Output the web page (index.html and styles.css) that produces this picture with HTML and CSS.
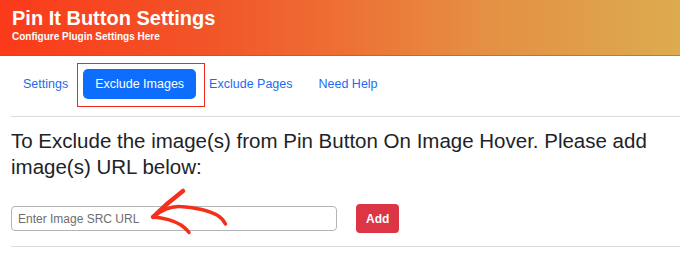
FILE: index.html
```html
<!DOCTYPE html>
<html lang="en">
<head>
<meta charset="utf-8">
<title>Pin It Button Settings</title>
<link rel="stylesheet" href="styles.css">
</head>
<body>
<header class="hero">
  <h1 class="hero-title">Pin It Button Settings</h1>
  <p class="hero-sub">Configure Plugin Settings Here</p>
</header>
<main class="content">
  <nav class="tabs">
    <a class="tab" href="#">Settings</a>
    <a class="tab tab-active" href="#">Exclude Images</a>
    <a class="tab" href="#">Exclude Pages</a>
    <a class="tab" href="#">Need Help</a>
  </nav>
  <hr class="rule">
  <h2 class="lead">To Exclude the image(s) from Pin Button On Image Hover. Please add image(s) URL below:</h2>
  <form class="add-row" onsubmit="return false">
    <input class="url-input" type="text" placeholder="Enter Image SRC URL">
    <button class="add-btn" type="submit">Add</button>
  </form>
  <hr class="rule">
</main>
<svg class="annot" width="680" height="270" viewBox="0 0 680 270" aria-hidden="true">
  <path d="M183,191 Q167,203 153,217" fill="none" stroke="#f4301c" stroke-width="4.5" stroke-linecap="round"/>
  <path d="M153,217 C163,209 172,206 180,206.5 C195,207 210,211 217,215 C222,218 224,221 225.5,224" fill="none" stroke="#f4301c" stroke-width="3.5" stroke-linecap="round"/>
  <path d="M153,217 C166,218 176,222 181,225 C185,228 188,231 189,232.5" fill="none" stroke="#f4301c" stroke-width="3.5" stroke-linecap="round"/>
</svg>
</body>
</html>
```

FILE: styles.css
```css
* { box-sizing: border-box; }
html, body { margin: 0; padding: 0; background: #fff; }
body {
  width: 680px;
  height: 270px;
  overflow: hidden;
  position: relative;
  font-family: "Liberation Sans", Arial, Helvetica, sans-serif;
  color: #1d2327;
}
.hero {
  height: 56px;
  padding: 6px 12px 0;
  background: linear-gradient(90deg, #fb3a1a 0%, #f25428 30%, #ee6f34 50%, #e58e43 70%, #dcab50 100%);
  border-bottom: 1px solid rgba(210, 70, 10, 0.55);
  color: #fff;
}
.hero-title {
  margin: 0;
  font-size: 20px;
  line-height: 24px;
  font-weight: bold;
}
.hero-sub {
  margin: 0;
  font-size: 10px;
  line-height: 14px;
  font-weight: bold;
}
.content {
  padding: 0 0 0 11px;
}
.tabs {
  display: flex;
  align-items: center;
  margin: 13px 0 0 -1px;
  height: 30px;
}
.tab {
  display: block;
  padding: 6px 13px;
  font-size: 12.5px;
  line-height: 18px;
  color: #1a6cf2;
  text-decoration: none;
}
.tab-active {
  position: relative;
  padding: 6px 12px;
  margin-left: 2px;
  background: #0d6efd;
  color: #fff;
  border-radius: 5px;
}
.tab-active::after {
  content: "";
  position: absolute;
  left: -6px;
  right: -9px;
  top: -6px;
  bottom: -8px;
  border: 1.5px solid #ee2a1e;
}
.rule {
  margin: 17px 0 0;
  border: 0;
  border-top: 1px solid #dcdcdc;
  height: 0;
}
.lead {
  margin: 11px 0 0;
  font-size: 20.5px;
  line-height: 26px;
  font-weight: normal;
  color: #1d2327;
}
.add-row {
  display: flex;
  align-items: center;
  gap: 19px;
  margin: 24px 0 0;
  height: 29px;
}
.url-input {
  width: 326px;
  height: 25px;
  padding: 0 6px;
  border: 1px solid #b4b4b4;
  border-radius: 4px;
  font-family: "Liberation Sans", Arial, sans-serif;
  font-size: 12px;
  color: #1d2327;
  background: #fff;
}
.url-input::placeholder { color: #6e6e6e; }
.add-btn {
  height: 29px;
  padding: 0 10px;
  border: 0;
  border-radius: 4px;
  background: #dc3545;
  color: #fff;
  font-family: "Liberation Sans", Arial, sans-serif;
  font-size: 12px;
  font-weight: bold;
}
.add-row + .rule { margin-top: 13px; }
.annot {
  position: absolute;
  left: 0;
  top: 0;
  pointer-events: none;
}
```
